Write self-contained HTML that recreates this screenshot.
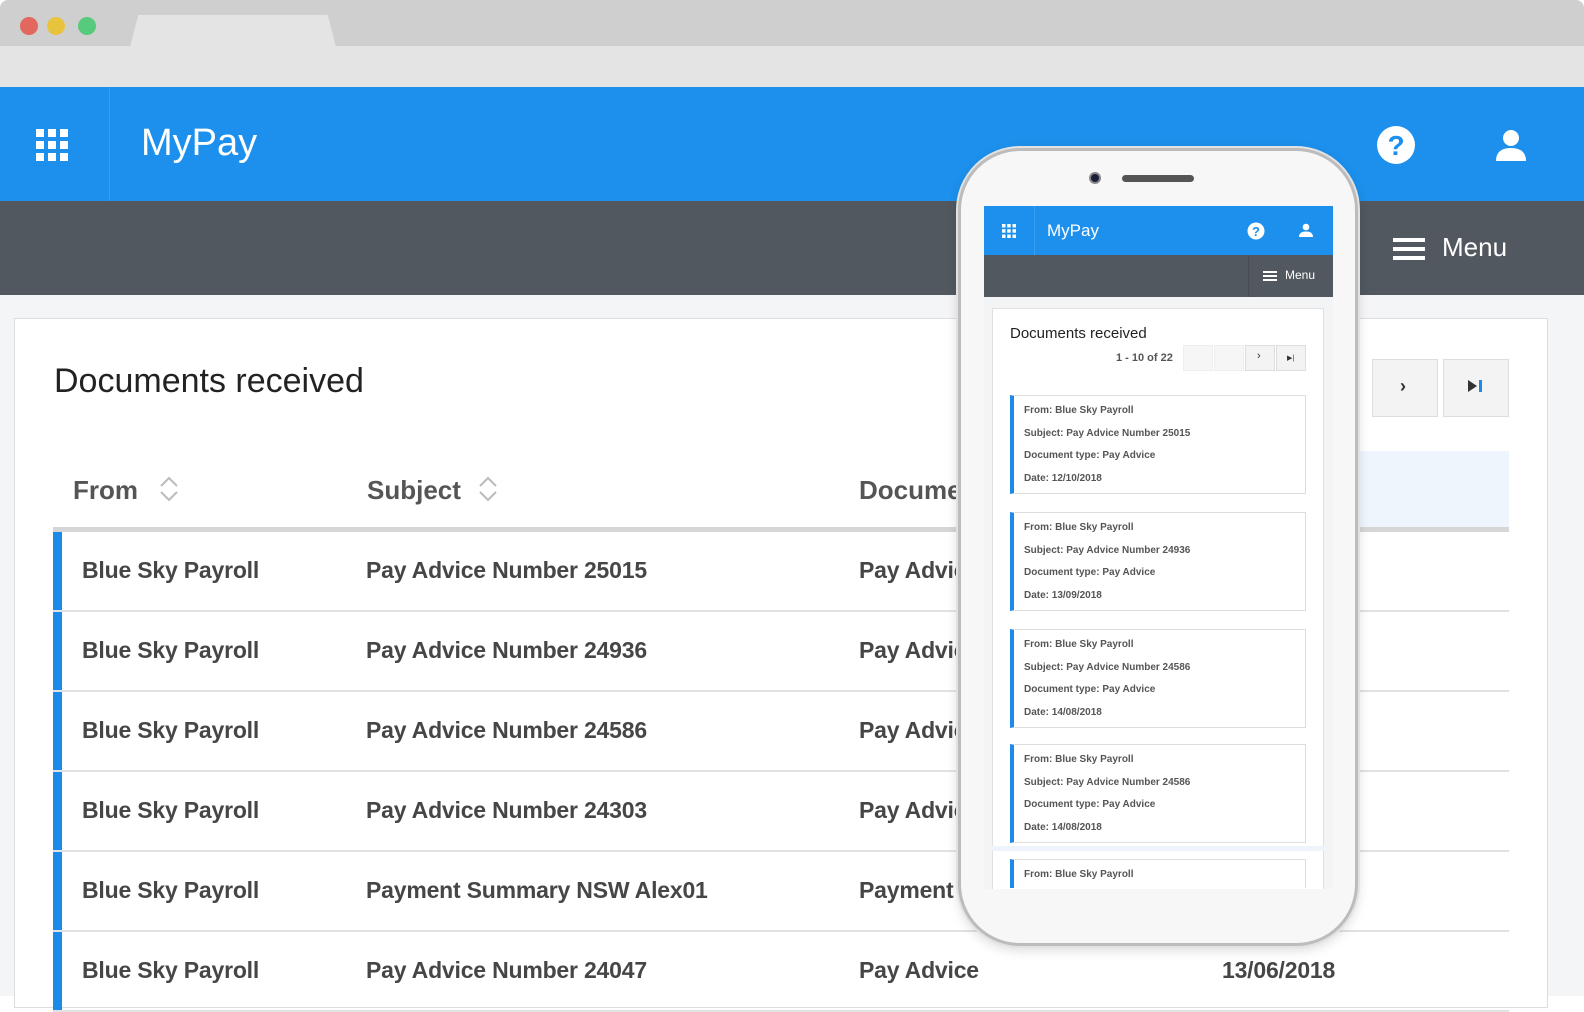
<!DOCTYPE html>
<html><head><meta charset="utf-8"><style>
*{margin:0;padding:0;box-sizing:border-box}
body{width:1584px;height:996px;overflow:hidden;background:#fff;font-family:"Liberation Sans",sans-serif;position:relative}
.a{position:absolute}
.row{position:absolute;left:53px;width:1456px;height:80px;border-bottom:2px solid #e2e2e2}
.row .bar{position:absolute;left:0;top:0;width:9px;height:78px;background:#1c8ae8}
.row span{position:absolute;top:25px;font-size:23px;font-weight:bold;color:#464646;letter-spacing:-0.2px}
.card{position:absolute;left:1010px;width:296px;height:99px;background:#fff;border:1px solid #ddd;border-left:4px solid #1c8ae8}
.card div{position:absolute;left:10px;font-size:10px;font-weight:bold;color:#555}
.btn{position:absolute;background:#f3f3f3;border:1px solid #ddd}
</style></head><body>
<div class="a" style="left:0;top:0;width:1584px;height:46px;background:#cfcfcf;border-radius:8px 8px 0 0"></div>
<div class="a" style="left:20px;top:17px;width:18px;height:18px;border-radius:50%;background:#e2675d"></div>
<div class="a" style="left:47px;top:17px;width:18px;height:18px;border-radius:50%;background:#e8c33e"></div>
<div class="a" style="left:78px;top:17px;width:18px;height:18px;border-radius:50%;background:#56cb7e"></div>
<div class="a" style="left:130px;top:15px;width:206px;height:32px;background:#e4e4e4;clip-path:polygon(4% 0,96% 0,100% 100%,0 100%)"></div>
<div class="a" style="left:0;top:46px;width:1584px;height:41px;background:#e4e4e4"></div>
<div class="a" style="left:0;top:87px;width:1584px;height:114px;background:#1c90ec"></div>
<div class="a" style="left:109px;top:87px;width:1px;height:114px;background:#3a9ef0"></div>
<svg class="a" style="left:36px;top:129px" width="32" height="32" viewBox="0 0 32 32" fill="#fff"><rect x="0" y="0" width="8" height="8"/><rect x="12" y="0" width="8" height="8"/><rect x="24" y="0" width="8" height="8"/><rect x="0" y="12" width="8" height="8"/><rect x="12" y="12" width="8" height="8"/><rect x="24" y="12" width="8" height="8"/><rect x="0" y="24" width="8" height="8"/><rect x="12" y="24" width="8" height="8"/><rect x="24" y="24" width="8" height="8"/></svg>
<div class="a" style="left:141px;top:122px;font-size:38px;color:#fff">MyPay</div>
<svg class="a" style="left:1376px;top:125px" width="40" height="40" viewBox="0 0 40 40"><circle cx="20" cy="20" r="19" fill="#fff"/><text x="20" y="30" text-anchor="middle" font-family="Liberation Sans" font-weight="bold" font-size="28" fill="#1c90ec">?</text></svg>
<svg class="a" style="left:1494px;top:128px" width="34" height="34" viewBox="0 0 34 34" fill="#fff"><circle cx="17" cy="10" r="8"/><path d="M2 33c0-10 7-13 15-13s15 3 15 13z"/></svg>
<div class="a" style="left:0;top:201px;width:1584px;height:94px;background:#51585f"></div>
<div class="a" style="left:1393px;top:238px;width:32px;height:4px;background:#fff;box-shadow:0 9px 0 #fff,0 18px 0 #fff"></div>
<div class="a" style="left:1442px;top:232px;font-size:26px;color:#fff">Menu</div>
<div class="a" style="left:0;top:295px;width:1584px;height:701px;background:#f4f5f7"></div>
<div class="a" style="left:14px;top:318px;width:1534px;height:690px;background:#fff;border:1px solid #ddd"></div>
<div class="a" style="left:54px;top:362px;font-size:34px;color:#222">Documents received</div>
<div class="btn" style="left:1372px;top:359px;width:66px;height:58px"></div>
<div class="btn" style="left:1443px;top:359px;width:66px;height:58px"></div>
<div class="a" style="left:1400px;top:376px;font-size:18px;color:#333;font-weight:bold">›</div>
<div class="a" style="left:1468px;top:380px;width:0;height:0;border-left:9px solid #333;border-top:6px solid transparent;border-bottom:6px solid transparent"></div>
<div class="a" style="left:1479px;top:380px;width:3px;height:12px;background:#1c8ae8"></div>
<div class="a" style="left:1020px;top:451px;width:489px;height:77px;background:#eef5fd"></div>
<div class="a" style="left:73px;top:475px;font-size:26px;font-weight:bold;color:#555">From</div>
<div class="a" style="left:367px;top:475px;font-size:26px;font-weight:bold;color:#555">Subject</div>
<div class="a" style="left:859px;top:475px;font-size:26px;font-weight:bold;color:#555">Document type</div>
<svg class="a" style="left:159px;top:475px" width="20" height="28" viewBox="0 0 20 28" fill="none" stroke="#bbb" stroke-width="2"><path d="M2 11l8-8 8 8M2 17l8 8 8-8"/></svg>
<svg class="a" style="left:478px;top:475px" width="20" height="28" viewBox="0 0 20 28" fill="none" stroke="#bbb" stroke-width="2"><path d="M2 11l8-8 8 8M2 17l8 8 8-8"/></svg>
<div class="a" style="left:53px;top:527px;width:1456px;height:5px;background:#d6d6d6"></div>
<div class="row" style="top:532px"><div class="bar"></div><span style="left:29px">Blue Sky Payroll</span><span style="left:313px">Pay Advice Number 25015</span><span style="left:806px">Pay Advice</span></div>
<div class="row" style="top:612px"><div class="bar"></div><span style="left:29px">Blue Sky Payroll</span><span style="left:313px">Pay Advice Number 24936</span><span style="left:806px">Pay Advice</span></div>
<div class="row" style="top:692px"><div class="bar"></div><span style="left:29px">Blue Sky Payroll</span><span style="left:313px">Pay Advice Number 24586</span><span style="left:806px">Pay Advice</span></div>
<div class="row" style="top:772px"><div class="bar"></div><span style="left:29px">Blue Sky Payroll</span><span style="left:313px">Pay Advice Number 24303</span><span style="left:806px">Pay Advice</span></div>
<div class="row" style="top:852px"><div class="bar"></div><span style="left:29px">Blue Sky Payroll</span><span style="left:313px">Payment Summary NSW Alex01</span><span style="left:806px">Payment Summary</span></div>
<div class="row" style="top:932px"><div class="bar"></div><span style="left:29px">Blue Sky Payroll</span><span style="left:313px">Pay Advice Number 24047</span><span style="left:806px">Pay Advice</span><span style="left:1169px">13/06/2018</span></div>
<div class="a" style="left:958px;top:148px;width:400px;height:798px;border-radius:62px;background:#f7f7f7;border:3px solid #bcbcbc;box-shadow:0 0 0 2px #e2e2e2,0 4px 12px rgba(0,0,0,.15)"></div>
<div class="a" style="left:1089px;top:172px;width:12px;height:12px;border-radius:50%;background:#1a1f3a;border:2px solid #888"></div>
<div class="a" style="left:1122px;top:175px;width:72px;height:7px;border-radius:4px;background:#555"></div>
<div class="a" style="left:984px;top:206px;width:349px;height:683px;background:#f3f4f6;overflow:hidden">
  <div class="a" style="left:0;top:0;width:349px;height:49px;background:#1c90ec"></div>
  <div class="a" style="left:50px;top:0;width:1px;height:49px;background:#3a9ef0"></div>
  <svg class="a" style="left:18px;top:18px" width="14" height="14" viewBox="0 0 14 14" fill="#fff"><rect x="0" y="0" width="3.5" height="3.5"/><rect x="5.2" y="0" width="3.5" height="3.5"/><rect x="10.5" y="0" width="3.5" height="3.5"/><rect x="0" y="5.2" width="3.5" height="3.5"/><rect x="5.2" y="5.2" width="3.5" height="3.5"/><rect x="10.5" y="5.2" width="3.5" height="3.5"/><rect x="0" y="10.5" width="3.5" height="3.5"/><rect x="5.2" y="10.5" width="3.5" height="3.5"/><rect x="10.5" y="10.5" width="3.5" height="3.5"/></svg>
  <div class="a" style="left:63px;top:15px;font-size:17px;color:#fff">MyPay</div>
  <svg class="a" style="left:263px;top:16px" width="18" height="18" viewBox="0 0 18 18"><circle cx="9" cy="9" r="8.5" fill="#fff"/><text x="9" y="14" text-anchor="middle" font-family="Liberation Sans" font-weight="bold" font-size="13" fill="#1c90ec">?</text></svg>
  <svg class="a" style="left:315px;top:17px" width="14" height="14" viewBox="0 0 14 14" fill="#fff"><circle cx="7" cy="4" r="3.3"/><path d="M0 14c0-4 3-5.5 7-5.5s7 1.5 7 5.5z"/></svg>
  <div class="a" style="left:0;top:49px;width:349px;height:42px;background:#51585f"></div>
  <div class="a" style="left:264px;top:49px;width:1px;height:42px;background:#464c52"></div>
  <div class="a" style="left:279px;top:65px;width:14px;height:2px;background:#fff;box-shadow:0 4px 0 #fff,0 8px 0 #fff"></div>
  <div class="a" style="left:301px;top:62px;font-size:12px;color:#fff">Menu</div>
  <div class="a" style="left:8px;top:102px;width:332px;height:600px;background:#fff;border:1px solid #e0e0e0"></div>
  <div class="a" style="left:26px;top:119px;font-size:15px;color:#222">Documents received</div>
  <div class="a" style="left:132px;top:146px;font-size:11px;font-weight:bold;color:#555">1 - 10 of 22</div>
  <div class="btn" style="left:199px;top:139px;width:30px;height:26px;background:#f6f6f6;border-color:#eee"></div>
  <div class="btn" style="left:230px;top:139px;width:30px;height:26px;background:#f6f6f6;border-color:#eee"></div>
  <div class="btn" style="left:261px;top:139px;width:30px;height:26px"></div>
  <div class="btn" style="left:292px;top:139px;width:30px;height:26px"></div>
  <div class="a" style="left:273px;top:144px;font-size:11px;color:#333">›</div>
  <div class="a" style="left:303px;top:148px;font-size:7px;color:#333">▶|</div>
</div>
<div class="card" style="top:395px"><div style="top:9px">From: Blue Sky Payroll</div><div style="top:32px">Subject: Pay Advice Number 25015</div><div style="top:54px">Document type: Pay Advice</div><div style="top:77px">Date: 12/10/2018</div></div>
<div class="card" style="top:512px"><div style="top:9px">From: Blue Sky Payroll</div><div style="top:32px">Subject: Pay Advice Number 24936</div><div style="top:54px">Document type: Pay Advice</div><div style="top:77px">Date: 13/09/2018</div></div>
<div class="card" style="top:629px"><div style="top:9px">From: Blue Sky Payroll</div><div style="top:32px">Subject: Pay Advice Number 24586</div><div style="top:54px">Document type: Pay Advice</div><div style="top:77px">Date: 14/08/2018</div></div>
<div class="card" style="top:744px"><div style="top:9px">From: Blue Sky Payroll</div><div style="top:32px">Subject: Pay Advice Number 24586</div><div style="top:54px">Document type: Pay Advice</div><div style="top:77px">Date: 14/08/2018</div></div>
<div class="a" style="left:992px;top:846px;width:332px;height:5px;background:#eef4fb"></div>
<div class="card" style="top:859px;height:29px;border-bottom:none"><div style="top:9px">From: Blue Sky Payroll</div></div>
</body></html>
